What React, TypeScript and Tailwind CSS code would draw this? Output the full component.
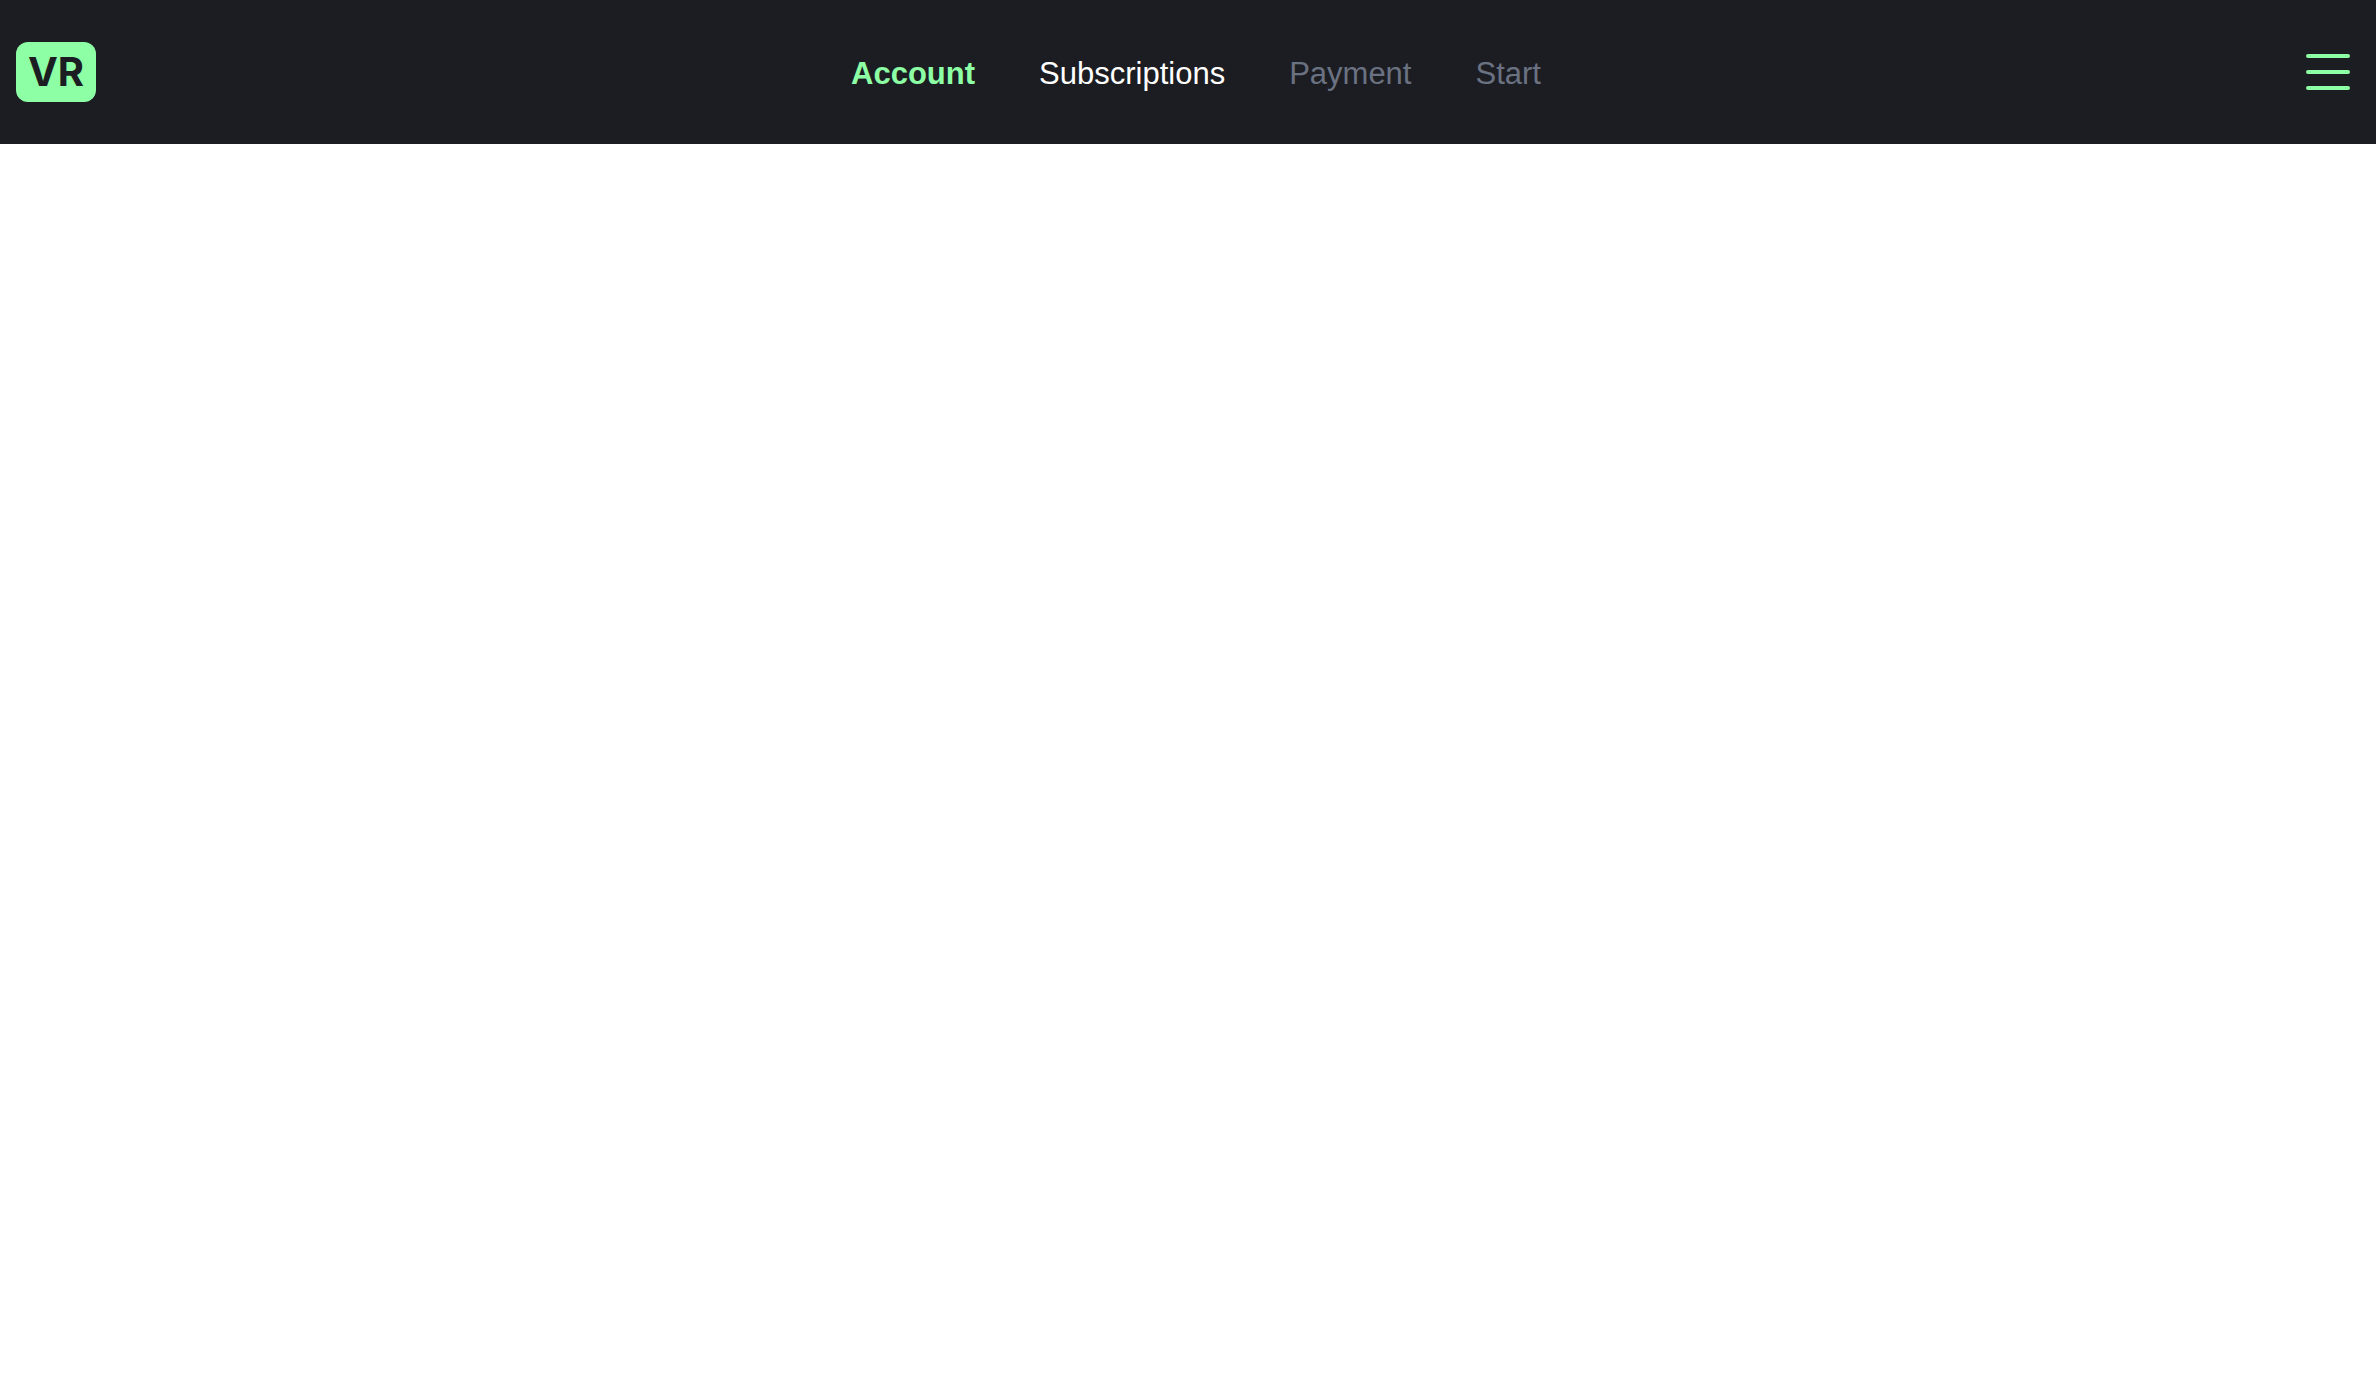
interface Step {
  label: string;
  href: string;
  className: string;
}

const steps: Step[] = [
  { label: 'Account', href: '#account', className: 'font-bold text-[#8dffa5]' },
  { label: 'Subscriptions', href: '#subscriptions', className: 'text-white' },
  { label: 'Payment', href: '#payment', className: 'text-gray-500' },
  { label: 'Start', href: '#start', className: 'text-gray-500' },
];

export default function App() {
  return (
    <div className="min-h-screen bg-white font-['Liberation_Sans',Arial,sans-serif]">
      <header className="flex h-36 items-center justify-between bg-[#1c1d22] px-4">
        <a
          href="#home"
          className="flex h-15 w-20 items-center justify-center rounded-xl bg-[#8dffa5] font-['Inter',sans-serif] text-[40px] font-bold text-[#1c1d22]"
        >
          VR
        </a>

        <nav aria-label="Steps" className="flex items-center gap-16 pt-1 text-[31px]">
          {steps.map((step) => (
            <a key={step.href} href={step.href} className={step.className}>
              {step.label}
            </a>
          ))}
        </nav>

        <button type="button" aria-label="Open menu" className="text-[#8dffa5]">
          <svg viewBox="0 0 64 64" className="size-16" fill="none" stroke="currentColor" strokeWidth="4" strokeLinecap="round">
            <path d="M12 16h40M12 32h40M12 48h40" />
          </svg>
        </button>
      </header>
    </div>
  );
}
